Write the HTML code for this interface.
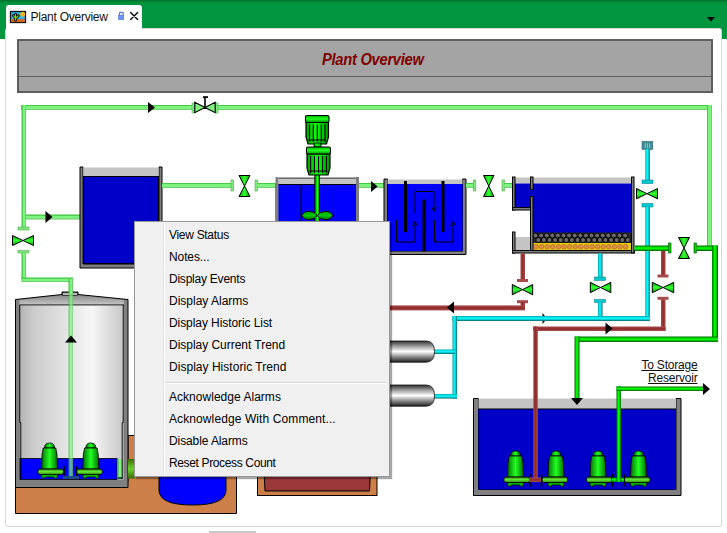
<!DOCTYPE html>
<html><head><meta charset="utf-8"><style>
html,body{margin:0;padding:0;background:#fff;}
body{width:727px;height:533px;overflow:hidden;position:relative;font-family:"Liberation Sans",sans-serif;}
.band{position:absolute;left:0;top:0;width:727px;height:39px;background:linear-gradient(#006e2a 0px,#008a38 2px,#00963f 4px,#00963f 100%);}
.panel{position:absolute;left:5px;top:28px;width:715px;height:497px;background:#fff;border:1px solid #d6d6d6;border-radius:2.5px;}
.tab{position:absolute;left:6px;top:5px;width:136px;height:26px;background:#fff;border-radius:3px 3px 0 0;}
.tabt{position:absolute;left:30.5px;top:10px;font-size:12px;letter-spacing:-0.25px;color:#111;white-space:nowrap;}
.title{position:absolute;left:322px;top:51px;font-size:16px;font-weight:bold;font-style:italic;color:#800000;letter-spacing:-0.3px;transform:scaleX(0.92);transform-origin:0 0;white-space:nowrap;}
.menu{position:absolute;left:134px;top:221px;width:254px;height:254px;background:#f0f0f0;border:1px solid #979797;box-shadow:2px 2px 1px rgba(0,0,0,0.35);}
.menu .sep1{position:absolute;left:28px;top:0;width:1px;height:254px;background:#e2e2e2;}
.menu .sep1b{position:absolute;left:29px;top:0;width:1px;height:254px;background:#fff;}
.menu .sep2{position:absolute;left:30px;top:160px;width:222px;height:1px;background:#d7d7d7;}
.menu .sep2b{position:absolute;left:30px;top:161px;width:222px;height:1px;background:#fff;}
.mi{position:absolute;left:34px;font-size:12px;color:#000;white-space:nowrap;line-height:14px;letter-spacing:-0.25px;}
.link{position:absolute;font-size:12px;color:#111;text-decoration:underline;white-space:nowrap;line-height:14px;}
svg{position:absolute;left:0;top:0;}
</style></head><body>
<div class="band"></div>
<div class="panel"></div>
<div class="tab"></div>
<svg width="727" height="533" viewBox="0 0 727 533" style="position:absolute;left:0;top:0">
<rect x="10.5" y="11.5" width="15" height="11" fill="#2cb8f0" stroke="#111" stroke-width="1.3"/>
<rect x="11.2" y="19.2" width="13.6" height="2.7" fill="#e8600c"/>
<circle cx="22.7" cy="14.3" r="2.5" fill="#f6b214"/>
<path d="M15.6 20.2V14.3M15.6 18.2L13.5 15.6M15.8 18.3L18.3 15.7" stroke="#000" stroke-width="2.8" stroke-linecap="round" fill="none"/>
<path d="M15.6 20V14.4M15.6 18.2L13.6 15.7M15.8 18.3L18.2 15.8" stroke="#86e000" stroke-width="1.1" stroke-linecap="round" fill="none"/>
<path d="M119.7 15.3V13.1Q119.7 12.3 120.5 12.3H122.3Q123.1 12.3 123.1 13.1V15.3" stroke="#3c62b8" stroke-width="1.1" fill="none"/>
<rect x="118.5" y="15.3" width="5.2" height="4.3" fill="#6a96f2" stroke="#4a70c8" stroke-width="0.6"/>
<path d="M130.6 12.4L137.6 19.4M137.6 12.4L130.6 19.4" stroke="#000" stroke-width="1.35" stroke-linecap="round"/>
<path d="M707 17H715L711 21.5Z" fill="#000"/>
</svg>
<div class="tabt">Plant Overview</div>
<svg width="727" height="533" viewBox="0 0 727 533">
<defs><linearGradient id="lgH" x1="0" y1="0" x2="0" y2="1"><stop offset="0" stop-color="#3fbf3f"/><stop offset="0.22" stop-color="#4fd04f"/><stop offset="0.25" stop-color="#7df47d"/><stop offset="0.7" stop-color="#7df47d"/><stop offset="1" stop-color="#6cb86c"/></linearGradient><linearGradient id="lgV" x1="0" y1="0" x2="1" y2="0"><stop offset="0" stop-color="#3fbf3f"/><stop offset="0.22" stop-color="#4fd04f"/><stop offset="0.25" stop-color="#7df47d"/><stop offset="0.7" stop-color="#7df47d"/><stop offset="1" stop-color="#6cb86c"/></linearGradient><linearGradient id="cyH" x1="0" y1="0" x2="0" y2="1"><stop offset="0" stop-color="#009ca0"/><stop offset="0.25" stop-color="#00e4ea"/><stop offset="0.5" stop-color="#10f4f8"/><stop offset="0.8" stop-color="#00b4b8"/><stop offset="1" stop-color="#005458"/></linearGradient><linearGradient id="cyV" x1="0" y1="0" x2="1" y2="0"><stop offset="0" stop-color="#009ca0"/><stop offset="0.25" stop-color="#00e4ea"/><stop offset="0.5" stop-color="#10f4f8"/><stop offset="0.8" stop-color="#00b4b8"/><stop offset="1" stop-color="#005458"/></linearGradient><linearGradient id="rdH" x1="0" y1="0" x2="0" y2="1"><stop offset="0" stop-color="#a64c4c"/><stop offset="0.5" stop-color="#922a2a"/><stop offset="1" stop-color="#a64c4c"/></linearGradient><linearGradient id="rdV" x1="0" y1="0" x2="1" y2="0"><stop offset="0" stop-color="#a64c4c"/><stop offset="0.5" stop-color="#922a2a"/><stop offset="1" stop-color="#a64c4c"/></linearGradient><linearGradient id="bgH" x1="0" y1="0" x2="0" y2="1"><stop offset="0" stop-color="#006e00"/><stop offset="0.45" stop-color="#00ff00"/><stop offset="0.6" stop-color="#00ee00"/><stop offset="1" stop-color="#005a00"/></linearGradient><linearGradient id="bgV" x1="0" y1="0" x2="1" y2="0"><stop offset="0" stop-color="#006e00"/><stop offset="0.45" stop-color="#00ff00"/><stop offset="0.6" stop-color="#00ee00"/><stop offset="1" stop-color="#005a00"/></linearGradient><linearGradient id="valveG" x1="0" y1="0" x2="0" y2="1"><stop offset="0" stop-color="#00a000"/><stop offset="0.5" stop-color="#33ff33"/><stop offset="1" stop-color="#00a000"/></linearGradient><linearGradient id="valveGV" x1="0" y1="0" x2="1" y2="0"><stop offset="0" stop-color="#00a000"/><stop offset="0.5" stop-color="#33ff33"/><stop offset="1" stop-color="#00a000"/></linearGradient><linearGradient id="silo" x1="0" y1="0" x2="1" y2="0"><stop offset="0" stop-color="#b4b4b4"/><stop offset="0.12" stop-color="#cacaca"/><stop offset="0.7" stop-color="#f6f6f6"/><stop offset="1" stop-color="#c6c6c6"/></linearGradient><linearGradient id="roof" x1="0" y1="0" x2="0" y2="1"><stop offset="0" stop-color="#8a8a8a"/><stop offset="1" stop-color="#c8c8c8"/></linearGradient><linearGradient id="cyl" x1="0" y1="0" x2="0" y2="1"><stop offset="0" stop-color="#303030"/><stop offset="0.25" stop-color="#a0a0a0"/><stop offset="0.5" stop-color="#ffffff"/><stop offset="0.75" stop-color="#8a8a8a"/><stop offset="1" stop-color="#202020"/></linearGradient><linearGradient id="pump" x1="0" y1="0" x2="1" y2="0"><stop offset="0" stop-color="#007000"/><stop offset="0.5" stop-color="#22ff22"/><stop offset="1" stop-color="#007000"/></linearGradient><linearGradient id="motor" x1="0" y1="0" x2="1" y2="0"><stop offset="0" stop-color="#006a00"/><stop offset="0.4" stop-color="#00f000"/><stop offset="0.55" stop-color="#22ff22"/><stop offset="1" stop-color="#006a00"/></linearGradient><linearGradient id="leaf" x1="0" y1="0" x2="0" y2="1"><stop offset="0" stop-color="#00a000"/><stop offset="0.5" stop-color="#00c800"/><stop offset="1" stop-color="#007000"/></linearGradient><linearGradient id="motorB" x1="0" y1="0" x2="1" y2="0"><stop offset="0" stop-color="#00a000"/><stop offset="0.45" stop-color="#10ff10"/><stop offset="0.6" stop-color="#00e800"/><stop offset="1" stop-color="#009000"/></linearGradient><linearGradient id="motorC" x1="0" y1="0" x2="0" y2="1"><stop offset="0" stop-color="#00b000"/><stop offset="0.5" stop-color="#20ff20"/><stop offset="1" stop-color="#008a00"/></linearGradient><linearGradient id="tubeO" x1="0" y1="0" x2="0" y2="1"><stop offset="0" stop-color="#3a6a08"/><stop offset="0.5" stop-color="#6ad028"/><stop offset="1" stop-color="#3a6a08"/></linearGradient><linearGradient id="tubeG" x1="0" y1="0" x2="0" y2="1"><stop offset="0" stop-color="#2a7a10"/><stop offset="0.5" stop-color="#66ee33"/><stop offset="1" stop-color="#2a7a10"/></linearGradient></defs>
<rect x="18" y="40" width="694" height="52" fill="#a4a4a4" stroke="#5e5e5e" stroke-width="2"/>
<rect x="19" y="76" width="692" height="1" fill="#5e5e5e"/>
<rect x="21" y="105" width="172" height="5" fill="url(#lgH)"/>
<rect x="217" y="105" width="495" height="5" fill="url(#lgH)"/>
<rect x="21.5" y="105" width="4.5" height="122" fill="url(#lgV)"/>
<rect x="707" y="105" width="5" height="145" fill="url(#lgV)"/>
<path d="M148 102.0L155 107.5L148 113.0Z" fill="#000"/>
<rect x="192" y="103" width="2.5" height="10" fill="#7de87d" stroke="#5aba5a" stroke-width="0.6"/>
<rect x="215.5" y="103" width="2.5" height="10" fill="#7de87d" stroke="#5aba5a" stroke-width="0.6"/>
<path d="M194.8 102.3L205 107.5L194.8 112.7Z M215.2 102.3L205 107.5L215.2 112.7Z" fill="#80ee80" stroke="#000" stroke-width="1.1"/>
<rect x="204.2" y="97" width="1.6" height="10" fill="#000"/><rect x="203" y="96.2" width="5" height="1.8" fill="#000"/>
<rect x="26" y="214.5" width="54" height="5" fill="url(#lgH)"/>
<path d="M45.5 211.0L52.5 217L45.5 223.0Z" fill="#000"/>
<rect x="18" y="227" width="11" height="3" fill="#7fe87f" stroke="#4fb04f" stroke-width="0.6"/>
<path d="M12.5 235.5L23.0 240.5L12.5 245.5Z M33.5 235.5L23.0 240.5L33.5 245.5Z" fill="url(#valveG)" stroke="#000" stroke-width="1" stroke-linejoin="miter"/>
<rect x="18" y="250.5" width="11" height="2.5" fill="#7fe87f" stroke="#4fb04f" stroke-width="0.6"/>
<rect x="21.5" y="253" width="4.5" height="28" fill="url(#lgV)"/>
<rect x="21.5" y="277.5" width="51.5" height="4.5" fill="url(#lgH)"/>
<path d="M80 167H83V264H159V167H162V268H80Z" fill="#808080" stroke="#000" stroke-width="1"/>
<rect x="83.5" y="167.5" width="75" height="9.5" fill="#c4c4c4"/>
<rect x="83.5" y="176.5" width="75" height="87" fill="#0000c8" stroke="#000" stroke-width="1"/>
<rect x="162" y="183" width="70" height="5" fill="url(#lgH)"/>
<rect x="231" y="180" width="2.5" height="11" fill="#7fe87f" stroke="#4fb04f" stroke-width="0.6"/>
<path d="M239 175.5L250 175.5L244.5 186.0Z M239 196.5L250 196.5L244.5 186.0Z" fill="url(#valveGV)" stroke="#000" stroke-width="1"/>
<rect x="255" y="180" width="2.5" height="11" fill="#7fe87f" stroke="#4fb04f" stroke-width="0.6"/>
<rect x="257.5" y="183" width="18.5" height="5" fill="url(#lgH)"/>
<rect x="275.5" y="184" width="83" height="43" fill="#0000ff"/>
<rect x="278.5" y="178" width="78" height="6" fill="#c4c4c4"/>
<rect x="278.5" y="177.5" width="78" height="1.3" fill="#555"/>
<rect x="278.5" y="184" width="78" height="1" fill="#000"/>
<rect x="275.5" y="177" width="3" height="50" fill="#808080"/>
<rect x="356" y="177" width="3" height="50" fill="#808080"/>
<rect x="300.5" y="185" width="1" height="40" fill="#000"/>
<rect x="333" y="185" width="1" height="40" fill="#000"/>
<rect x="314.8" y="172" width="4.8" height="50" fill="url(#motor)" stroke="#000" stroke-width="0.8"/>
<path d="M302 215.5Q303.5 211.3 309.5 211.3Q315 211.8 317.2 215.5Q315 219.2 309.5 219.7Q303.5 219.7 302 215.5Z M332.6 215.5Q331.1 211.3 325.1 211.3Q319.6 211.8 317.4 215.5Q319.6 219.2 325.1 219.7Q331.1 219.7 332.6 215.5Z" fill="url(#leaf)" stroke="#000" stroke-width="1"/>
<path d="M306.0 122.5H328.5V137L326.5 144H308.0L306.0 137Z" fill="url(#motorB)" stroke="#000" stroke-width="1.2"/><rect x="308.945" y="124.5" width="1.1" height="17.5" fill="#000"/><rect x="312.705" y="124.5" width="1.1" height="17.5" fill="#000"/><rect x="316.7" y="124.5" width="1.1" height="17.5" fill="#000"/><rect x="320.695" y="124.5" width="1.1" height="17.5" fill="#000"/><rect x="324.455" y="124.5" width="1.1" height="17.5" fill="#000"/><rect x="308.5" y="139.5" width="17.5" height="1" fill="#000"/><rect x="305.5" y="115.5" width="23.5" height="7.0" rx="1.5" fill="url(#motorC)" stroke="#000" stroke-width="1.1"/>
<rect x="314" y="143" width="7" height="4" fill="url(#motorB)" stroke="#000" stroke-width="0.8"/>
<path d="M307.0 154H330.0V168L328.0 175H309.0L307.0 168Z" fill="url(#motorB)" stroke="#000" stroke-width="1.2"/><rect x="310.03" y="156" width="1.1" height="17" fill="#000"/><rect x="313.87" y="156" width="1.1" height="17" fill="#000"/><rect x="317.95" y="156" width="1.1" height="17" fill="#000"/><rect x="322.03" y="156" width="1.1" height="17" fill="#000"/><rect x="325.87" y="156" width="1.1" height="17" fill="#000"/><rect x="309.5" y="170.5" width="18.0" height="1" fill="#000"/><rect x="306.5" y="147" width="24.0" height="7" rx="1.5" fill="url(#motorC)" stroke="#000" stroke-width="1.1"/>
<rect x="359" y="183" width="25" height="5" fill="url(#lgH)"/>
<path d="M371 181.0L377.5 186.5L371 192.0Z" fill="#000"/>
<path d="M384 179H387.5V251H462.5V179H466V254.5H384Z" fill="#808080" stroke="#000" stroke-width="1"/>
<rect x="387.5" y="179.5" width="75" height="4.5" fill="#c4c4c4"/>
<rect x="387.5" y="184" width="75" height="67" fill="#0000ff"/>
<rect x="404" y="181" width="3" height="51" fill="#000"/>
<rect x="441.5" y="181" width="3" height="51" fill="#000"/>
<rect x="422.5" y="199.5" width="3" height="52" fill="#000"/>
<path d="M396.5 220V242H415V222 M412.5 226L415 221.5L417.5 226 M434.5 220V242H453V222 M450.5 226L453 221.5L455.5 226 M415 213V191.5H434V211 M431.5 207L434 211.5L436.5 207" fill="none" stroke="#000" stroke-width="1"/>
<rect x="466" y="183" width="9" height="5" fill="url(#lgH)"/>
<rect x="473.3" y="180" width="2.5" height="11" fill="#7fe87f" stroke="#4fb04f" stroke-width="0.6"/>
<path d="M483.5 175.5L494 175.5L488.75 186.0Z M483.5 196.5L494 196.5L488.75 186.0Z" fill="url(#valveGV)" stroke="#000" stroke-width="1"/>
<rect x="502" y="180" width="2.5" height="11" fill="#7fe87f" stroke="#4fb04f" stroke-width="0.6"/>
<rect x="504.5" y="183" width="8.5" height="5" fill="url(#lgH)"/>
<rect x="515" y="177.5" width="15.5" height="6" fill="#c4c4c4"/>
<rect x="515" y="183.5" width="15.5" height="24" fill="#0000c8"/>
<rect x="533" y="177.5" width="98.5" height="6" fill="#c4c4c4"/>
<rect x="533" y="183.5" width="98.5" height="49.5" fill="#0000c8"/>
<rect x="530" y="189.5" width="3" height="7" fill="#0000c8"/>
<rect x="515" y="237" width="15.5" height="13.5" fill="#c4c4c4"/>
<rect x="533" y="232.5" width="98.5" height="10.5" fill="#2a2a2a"/>
<circle cx="535.5" cy="235.5" r="2.5" fill="#6a6a6a" stroke="#000" stroke-width="0.9"/>
<circle cx="541.1" cy="235.5" r="2.5" fill="#6a6a6a" stroke="#000" stroke-width="0.9"/>
<circle cx="546.7" cy="235.5" r="2.5" fill="#6a6a6a" stroke="#000" stroke-width="0.9"/>
<circle cx="552.3" cy="235.5" r="2.5" fill="#6a6a6a" stroke="#000" stroke-width="0.9"/>
<circle cx="557.9" cy="235.5" r="2.5" fill="#6a6a6a" stroke="#000" stroke-width="0.9"/>
<circle cx="563.5" cy="235.5" r="2.5" fill="#6a6a6a" stroke="#000" stroke-width="0.9"/>
<circle cx="569.1" cy="235.5" r="2.5" fill="#6a6a6a" stroke="#000" stroke-width="0.9"/>
<circle cx="574.7" cy="235.5" r="2.5" fill="#6a6a6a" stroke="#000" stroke-width="0.9"/>
<circle cx="580.3" cy="235.5" r="2.5" fill="#6a6a6a" stroke="#000" stroke-width="0.9"/>
<circle cx="585.9" cy="235.5" r="2.5" fill="#6a6a6a" stroke="#000" stroke-width="0.9"/>
<circle cx="591.5" cy="235.5" r="2.5" fill="#6a6a6a" stroke="#000" stroke-width="0.9"/>
<circle cx="597.1" cy="235.5" r="2.5" fill="#6a6a6a" stroke="#000" stroke-width="0.9"/>
<circle cx="602.7" cy="235.5" r="2.5" fill="#6a6a6a" stroke="#000" stroke-width="0.9"/>
<circle cx="608.3" cy="235.5" r="2.5" fill="#6a6a6a" stroke="#000" stroke-width="0.9"/>
<circle cx="613.9" cy="235.5" r="2.5" fill="#6a6a6a" stroke="#000" stroke-width="0.9"/>
<circle cx="619.5" cy="235.5" r="2.5" fill="#6a6a6a" stroke="#000" stroke-width="0.9"/>
<circle cx="625.1" cy="235.5" r="2.5" fill="#6a6a6a" stroke="#000" stroke-width="0.9"/>
<circle cx="538.3" cy="240" r="2.5" fill="#6a6a6a" stroke="#000" stroke-width="0.9"/>
<circle cx="543.9" cy="240" r="2.5" fill="#6a6a6a" stroke="#000" stroke-width="0.9"/>
<circle cx="549.5" cy="240" r="2.5" fill="#6a6a6a" stroke="#000" stroke-width="0.9"/>
<circle cx="555.0999999999999" cy="240" r="2.5" fill="#6a6a6a" stroke="#000" stroke-width="0.9"/>
<circle cx="560.6999999999999" cy="240" r="2.5" fill="#6a6a6a" stroke="#000" stroke-width="0.9"/>
<circle cx="566.3" cy="240" r="2.5" fill="#6a6a6a" stroke="#000" stroke-width="0.9"/>
<circle cx="571.9" cy="240" r="2.5" fill="#6a6a6a" stroke="#000" stroke-width="0.9"/>
<circle cx="577.5" cy="240" r="2.5" fill="#6a6a6a" stroke="#000" stroke-width="0.9"/>
<circle cx="583.0999999999999" cy="240" r="2.5" fill="#6a6a6a" stroke="#000" stroke-width="0.9"/>
<circle cx="588.6999999999999" cy="240" r="2.5" fill="#6a6a6a" stroke="#000" stroke-width="0.9"/>
<circle cx="594.3" cy="240" r="2.5" fill="#6a6a6a" stroke="#000" stroke-width="0.9"/>
<circle cx="599.9" cy="240" r="2.5" fill="#6a6a6a" stroke="#000" stroke-width="0.9"/>
<circle cx="605.5" cy="240" r="2.5" fill="#6a6a6a" stroke="#000" stroke-width="0.9"/>
<circle cx="611.0999999999999" cy="240" r="2.5" fill="#6a6a6a" stroke="#000" stroke-width="0.9"/>
<circle cx="616.6999999999999" cy="240" r="2.5" fill="#6a6a6a" stroke="#000" stroke-width="0.9"/>
<circle cx="622.3" cy="240" r="2.5" fill="#6a6a6a" stroke="#000" stroke-width="0.9"/>
<circle cx="627.9" cy="240" r="2.5" fill="#6a6a6a" stroke="#000" stroke-width="0.9"/>
<rect x="533" y="243" width="98.5" height="7.5" fill="#e4cc10"/>
<circle cx="536.0" cy="246.8" r="2.4" fill="#d89040" stroke="#c87030" stroke-width="0.8"/>
<circle cx="541.6" cy="246.8" r="2.4" fill="#d89040" stroke="#c87030" stroke-width="0.8"/>
<circle cx="547.2" cy="246.8" r="2.4" fill="#d89040" stroke="#c87030" stroke-width="0.8"/>
<circle cx="552.8" cy="246.8" r="2.4" fill="#d89040" stroke="#c87030" stroke-width="0.8"/>
<circle cx="558.4" cy="246.8" r="2.4" fill="#d89040" stroke="#c87030" stroke-width="0.8"/>
<circle cx="564.0" cy="246.8" r="2.4" fill="#d89040" stroke="#c87030" stroke-width="0.8"/>
<circle cx="569.6" cy="246.8" r="2.4" fill="#d89040" stroke="#c87030" stroke-width="0.8"/>
<circle cx="575.2" cy="246.8" r="2.4" fill="#d89040" stroke="#c87030" stroke-width="0.8"/>
<circle cx="580.8" cy="246.8" r="2.4" fill="#d89040" stroke="#c87030" stroke-width="0.8"/>
<circle cx="586.4" cy="246.8" r="2.4" fill="#d89040" stroke="#c87030" stroke-width="0.8"/>
<circle cx="592.0" cy="246.8" r="2.4" fill="#d89040" stroke="#c87030" stroke-width="0.8"/>
<circle cx="597.6" cy="246.8" r="2.4" fill="#d89040" stroke="#c87030" stroke-width="0.8"/>
<circle cx="603.2" cy="246.8" r="2.4" fill="#d89040" stroke="#c87030" stroke-width="0.8"/>
<circle cx="608.8" cy="246.8" r="2.4" fill="#d89040" stroke="#c87030" stroke-width="0.8"/>
<circle cx="614.4" cy="246.8" r="2.4" fill="#d89040" stroke="#c87030" stroke-width="0.8"/>
<circle cx="620.0" cy="246.8" r="2.4" fill="#d89040" stroke="#c87030" stroke-width="0.8"/>
<circle cx="625.6" cy="246.8" r="2.4" fill="#d89040" stroke="#c87030" stroke-width="0.8"/>
<rect x="512.5" y="177" width="2.5" height="33" fill="#808080" stroke="#000" stroke-width="1"/>
<rect x="512.5" y="207.5" width="19" height="2.5" fill="#808080" stroke="#000" stroke-width="1"/>
<rect x="530.5" y="177" width="2.5" height="12.5" fill="#808080" stroke="#000" stroke-width="1"/>
<rect x="530.5" y="196.5" width="2.5" height="56" fill="#808080" stroke="#000" stroke-width="1"/>
<rect x="512.5" y="232" width="2.5" height="21" fill="#808080" stroke="#000" stroke-width="1"/>
<rect x="512.5" y="250.5" width="122" height="2.5" fill="#808080" stroke="#000" stroke-width="1"/>
<rect x="631.5" y="177" width="2.5" height="76" fill="#808080" stroke="#000" stroke-width="1"/>
<rect x="642" y="141.3" width="10.8" height="8.2" fill="#3f8f98" stroke="#2a5a60" stroke-width="0.5"/>
<path d="M645.3 143.5V148M647.5 143.5V148M649.7 143.5V148" stroke="#8fd8e0" stroke-width="0.8"/>
<rect x="645.3" y="149" width="4.5" height="32" fill="url(#cyV)"/>
<rect x="642" y="180" width="11" height="3.6" fill="#00c8d0" stroke="#007a80" stroke-width="0.5"/>
<path d="M636.5 188.5L647.0 193.65L636.5 198.8Z M657.5 188.5L647.0 193.65L657.5 198.8Z" fill="url(#valveG)" stroke="#000" stroke-width="1" stroke-linejoin="miter"/>
<rect x="642" y="203.5" width="11" height="3.5" fill="#00c8d0" stroke="#007a80" stroke-width="0.5"/>
<rect x="645.3" y="207" width="4.5" height="114" fill="url(#cyV)"/>
<path d="M473.5 398.5H478.5V489.5H676V398.5H681V495.5H473.5Z" fill="#808080" stroke="#000" stroke-width="1"/>
<rect x="478.5" y="398.5" width="197.5" height="10.5" fill="#c4c4c4"/>
<rect x="478.5" y="409" width="197.5" height="80.5" fill="#0000c8"/>
<rect x="478.5" y="408.5" width="197.5" height="1" fill="#000"/>
<rect x="634.5" y="245.5" width="36.5" height="5.5" fill="url(#bgH)"/>
<rect x="668.5" y="243" width="2.5" height="10" fill="#00d000" stroke="#005000" stroke-width="0.6"/>
<path d="M678.5 237.5L689.5 237.5L684.0 248.0Z M678.5 258.5L689.5 258.5L684.0 248.0Z" fill="url(#valveGV)" stroke="#000" stroke-width="1"/>
<rect x="694" y="243" width="2.5" height="10" fill="#00d000" stroke="#005000" stroke-width="0.6"/>
<rect x="696.5" y="245.5" width="21.5" height="5.5" fill="url(#bgH)"/>
<rect x="712" y="245.5" width="6" height="96.5" fill="url(#bgV)"/>
<rect x="575" y="336.5" width="143" height="5.5" fill="url(#bgH)"/>
<rect x="574.5" y="336.5" width="5" height="63.5" fill="url(#bgV)"/>
<path d="M571.0 398L577 405L583.0 398Z" fill="#000"/>
<rect x="520.5" y="253.5" width="4.5" height="26.5" fill="url(#rdV)"/>
<rect x="517" y="279" width="11" height="3" fill="#a64c4c"/>
<path d="M512.3 284.5L522.5 289.65L512.3 294.8Z M532.7 284.5L522.5 289.65L532.7 294.8Z" fill="url(#valveG)" stroke="#000" stroke-width="1" stroke-linejoin="miter"/>
<rect x="517" y="300.2" width="11" height="3" fill="#a64c4c"/>
<rect x="520.5" y="302" width="4.5" height="8" fill="url(#rdV)"/>
<rect x="388" y="305.4" width="137" height="5" fill="url(#rdH)"/>
<path d="M454 301.5L447 307.5L454 313.5Z" fill="#000"/>
<rect x="661" y="251" width="4.5" height="25" fill="url(#rdV)"/>
<rect x="657.5" y="274.5" width="11" height="3" fill="#a64c4c"/>
<path d="M652.3 282.3L663.0 287.5L652.3 292.7Z M673.7 282.3L663.0 287.5L673.7 292.7Z" fill="url(#valveG)" stroke="#000" stroke-width="1" stroke-linejoin="miter"/>
<rect x="657.5" y="296.8" width="11" height="3" fill="#a64c4c"/>
<rect x="661" y="299.5" width="4.5" height="31.5" fill="url(#rdV)"/>
<rect x="533" y="326.5" width="132.5" height="4.5" fill="url(#rdH)"/>
<rect x="533.3" y="326.5" width="4.5" height="154.5" fill="url(#rdV)"/>
<path d="M605.5 322.5L612.5 328.5L605.5 334.5Z" fill="#000"/>
<rect x="598" y="253.5" width="4.5" height="24.5" fill="url(#cyV)"/>
<rect x="594.5" y="277" width="11" height="3.5" fill="#00c8d0" stroke="#007a80" stroke-width="0.5"/>
<path d="M590.3 282.3L600.55 287.5L590.3 292.7Z M610.8 282.3L600.55 287.5L610.8 292.7Z" fill="url(#valveG)" stroke="#000" stroke-width="1" stroke-linejoin="miter"/>
<rect x="594.5" y="299.5" width="11" height="3" fill="#00c8d0" stroke="#007a80" stroke-width="0.5"/>
<rect x="598" y="302.5" width="4.5" height="15.5" fill="url(#cyV)"/>
<path d="M542.5 313.0L547.0 318.5L542.5 324.0Z" fill="#000"/>
<rect x="452.5" y="316" width="197.5" height="5" fill="url(#cyH)"/>
<rect x="452.5" y="316" width="4.5" height="82.5" fill="url(#cyV)"/>
<rect x="434" y="349.5" width="21" height="4.5" fill="url(#cyH)"/>
<rect x="434" y="394" width="23" height="4.5" fill="url(#cyH)"/>
<path d="M385 341H426Q434.5 341 434.5 351.6Q434.5 362.2 426 362.2H385Z" fill="url(#cyl)" stroke="#111" stroke-width="0.8"/>
<path d="M385 385H426Q434.5 385 434.5 395.6Q434.5 406.2 426 406.2H385Z" fill="url(#cyl)" stroke="#111" stroke-width="0.8"/>
<path d="M510.5 456Q510.5 451 515.5 451Q520.5 451 520.5 456Z" fill="url(#pump)" stroke="#000" stroke-width="0.8"/><path d="M509.2 456H521.8L523.0 463L523.5 477H507.5L508.0 463Z" fill="url(#pump)" stroke="#000" stroke-width="0.8"/><rect x="504.0" y="477" width="25.5" height="5.5" rx="2" fill="url(#tubeG)" stroke="#000" stroke-width="0.8"/><rect x="529.3" y="474" width="1.5" height="12.5" fill="#000"/><path d="M507.5 482.5H523.5V485L521.5 487L519.5 485H511.5L509.5 487L507.5 485Z" fill="#00b000" stroke="#000" stroke-width="0.7"/>
<path d="M551 456Q551 451 556 451Q561 451 561 456Z" fill="url(#pump)" stroke="#000" stroke-width="0.8"/><path d="M549.7 456H562.3L563.5 463L564 477H548L548.5 463Z" fill="url(#pump)" stroke="#000" stroke-width="0.8"/><rect x="542" y="477" width="25.5" height="5.5" rx="2" fill="url(#tubeG)" stroke="#000" stroke-width="0.8"/><rect x="540.8" y="474" width="1.5" height="12.5" fill="#000"/><path d="M548 482.5H564V485L562 487L560 485H552L550 487L548 485Z" fill="#00b000" stroke="#000" stroke-width="0.7"/>
<path d="M593 456Q593 451 598 451Q603 451 603 456Z" fill="url(#pump)" stroke="#000" stroke-width="0.8"/><path d="M591.7 456H604.3L605.5 463L606 477H590L590.5 463Z" fill="url(#pump)" stroke="#000" stroke-width="0.8"/><rect x="586.5" y="477" width="25.5" height="5.5" rx="2" fill="url(#tubeG)" stroke="#000" stroke-width="0.8"/><rect x="611.8" y="474" width="1.5" height="12.5" fill="#000"/><path d="M590 482.5H606V485L604 487L602 485H594L592 487L590 485Z" fill="#00b000" stroke="#000" stroke-width="0.7"/>
<path d="M633.5 456Q633.5 451 638.5 451Q643.5 451 643.5 456Z" fill="url(#pump)" stroke="#000" stroke-width="0.8"/><path d="M632.2 456H644.8L646.0 463L646.5 477H630.5L631.0 463Z" fill="url(#pump)" stroke="#000" stroke-width="0.8"/><rect x="624.5" y="477" width="25.5" height="5.5" rx="2" fill="url(#tubeG)" stroke="#000" stroke-width="0.8"/><rect x="623.3" y="474" width="1.5" height="12.5" fill="#000"/><path d="M630.5 482.5H646.5V485L644.5 487L642.5 485H634.5L632.5 487L630.5 485Z" fill="#00b000" stroke="#000" stroke-width="0.7"/>
<rect x="529" y="477.5" width="12" height="4.5" fill="url(#rdH)"/>
<rect x="612" y="477.5" width="12" height="4.5" fill="url(#bgH)"/>
<rect x="616.5" y="386.5" width="4.5" height="95.5" fill="url(#bgV)"/>
<rect x="616.5" y="386.5" width="87.5" height="4.5" fill="url(#bgH)"/>
<path d="M703 383.0L710 389L703 395.0Z" fill="#000"/>
<path d="M15.5 481.5H128V435.5H236.5V513.5H15.5Z" fill="#cd7f4a" stroke="#000" stroke-width="1"/>
<rect x="257.5" y="460" width="119.5" height="35.5" fill="#cd7f4a" stroke="#000" stroke-width="1"/>
<path d="M263.5 460H371L369.5 491H265Z" fill="#9a3838" stroke="#000" stroke-width="1"/>
<path d="M159 470H226V490Q226 505 192.5 505Q159 505 159 490Z" fill="#0000ff" stroke="#000" stroke-width="1"/>
<path d="M15.5 299.5L62 294.5V292H78V294.5L128 299.5V487.5H15.5Z" fill="#808080" stroke="#000" stroke-width="1"/>
<path d="M19.5 300L62 295.5H78L124 300V305H19.5Z" fill="url(#roof)"/>
<rect x="19.5" y="304.5" width="104.5" height="1" fill="#000"/>
<rect x="20" y="305.5" width="103.5" height="174" fill="url(#silo)"/>
<rect x="62.5" y="292.5" width="15" height="3" fill="#b8b8b8" stroke="#000" stroke-width="0.6"/>
<rect x="20" y="458.5" width="97" height="21" fill="#0000ff" stroke="#000" stroke-width="0.8"/>
<rect x="117.5" y="459" width="5" height="19.5" fill="url(#lgV)" opacity="0.85"/>
<rect x="117.5" y="477" width="5" height="2" fill="#1a5a3a"/>
<rect x="128" y="459" width="7" height="19.5" fill="url(#tubeO)"/>
<path d="M19.8 305V422.5H20.8V479 M123.2 305V422.5H122.2V479" fill="none" stroke="#000" stroke-width="0.9"/>
<path d="M44.5 448Q44.5 443 49.5 443Q54.5 443 54.5 448Z" fill="url(#pump)" stroke="#000" stroke-width="0.8"/><path d="M43.2 448H55.8L57.0 455L57.5 469H41.5L42.0 455Z" fill="url(#pump)" stroke="#000" stroke-width="0.8"/><rect x="38.0" y="469" width="25.5" height="5.5" rx="2" fill="url(#tubeG)" stroke="#000" stroke-width="0.8"/><rect x="63.3" y="466" width="1.5" height="12.5" fill="#000"/><path d="M41.5 474.5H57.5V477L55.5 479L53.5 477H45.5L43.5 479L41.5 477Z" fill="#00b000" stroke="#000" stroke-width="0.7"/>
<path d="M85.8 448Q85.8 443 90.8 443Q95.8 443 95.8 448Z" fill="url(#pump)" stroke="#000" stroke-width="0.8"/><path d="M84.5 448H97.1L98.3 455L98.8 469H82.8L83.3 455Z" fill="url(#pump)" stroke="#000" stroke-width="0.8"/><rect x="76.8" y="469" width="25.5" height="5.5" rx="2" fill="url(#tubeG)" stroke="#000" stroke-width="0.8"/><rect x="75.6" y="466" width="1.5" height="12.5" fill="#000"/><path d="M82.8 474.5H98.8V477L96.8 479L94.8 477H86.8L84.8 479L82.8 477Z" fill="#00b000" stroke="#000" stroke-width="0.7"/>
<rect x="68.5" y="279" width="4.5" height="14" fill="url(#lgV)"/>
<g opacity="0.72"><rect x="68.5" y="293" width="4.5" height="185" fill="url(#lgV)"/></g>
<path d="M65.0 342.5L71 335.5L77.0 342.5Z" fill="#000"/>
<rect x="63" y="476" width="16" height="3" fill="#1a4a8a"/>
</svg>
<div class="title">Plant Overview</div>
<div class="link" style="right:29.5px;top:358px;letter-spacing:-0.2px">To Storage</div>
<div class="link" style="right:29.5px;top:371px;letter-spacing:-0.2px">Reservoir</div>
<div style="position:absolute;left:209px;top:531px;width:47px;height:2px;background:#c8c8c8"></div>
<div class="menu"><div class="sep1"></div><div class="sep1b"></div><div class="sep2"></div><div class="sep2b"></div><div class="mi" style="top:5.5px;letter-spacing:-0.3px">View Status</div><div class="mi" style="top:27.5px;letter-spacing:-0.1px">Notes...</div><div class="mi" style="top:49.5px;letter-spacing:-0.23px">Display Events</div><div class="mi" style="top:71.5px;letter-spacing:0px">Display Alarms</div><div class="mi" style="top:93.5px;letter-spacing:-0.075px">Display Historic List</div><div class="mi" style="top:115.5px;letter-spacing:-0.03px">Display Current Trend</div><div class="mi" style="top:137.5px;letter-spacing:0.03px">Display Historic Trend</div><div class="mi" style="top:167.5px;letter-spacing:0.03px">Acknowledge Alarms</div><div class="mi" style="top:189.5px;letter-spacing:0.1px">Acknowledge With Comment...</div><div class="mi" style="top:211.5px;letter-spacing:-0.1px">Disable Alarms</div><div class="mi" style="top:233.5px;letter-spacing:-0.36px">Reset Process Count</div></div>
</body></html>
